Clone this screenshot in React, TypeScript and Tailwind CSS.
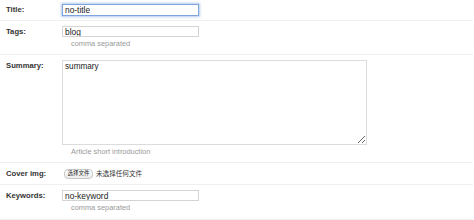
import React from "react";

const font = { fontFamily: '"Liberation Sans", Arial, "Noto Sans CJK SC", sans-serif' };

function Label({ children }: { children: React.ReactNode }) {
  return (
    <div className="w-[62px] shrink-0 pl-[6px] text-[7.7px] font-bold leading-[12px] text-[#333]">
      {children}
    </div>
  );
}

function Help({ children }: { children: React.ReactNode }) {
  return (
    <div className="mt-[2px] pl-[9px] text-[7.4px] leading-[10px] text-[#999999]">{children}</div>
  );
}

export default function App() {
  return (
    <div className="h-[220px] w-[474px] bg-white" style={font}>
      <div className="w-[473px]">
        {/* Title */}
        <div className="flex border-b border-[#efefef] pt-[4px] pb-[4px]">
          <Label>Title:</Label>
          <input
            readOnly
            value="no-title"
            className="box-border h-[12px] w-[137px] border border-[#7ea6dc] px-[2px] text-[8.4px] leading-[10px] text-[#222] outline-none shadow-[0_0_2px_1px_rgba(120,160,220,0.55)]"
          />
        </div>
        {/* Tags */}
        <div className="flex border-b border-[#efefef] pt-[5px] pb-[5px]">
          <Label>Tags:</Label>
          <div className="flex flex-col">
            <input
              readOnly
              value="blog"
              className="box-border h-[11px] w-[137px] border border-[#d4d4d4] px-[2px] text-[8.4px] leading-[9px] text-[#222] outline-none"
            />
            <Help>comma separated</Help>
          </div>
        </div>
        {/* Summary */}
        <div className="flex border-b border-[#efefef] pt-[5px] pb-[5px]">
          <Label>Summary:</Label>
          <div className="flex flex-col">
            <textarea
              readOnly
              value="summary"
              className="box-border block h-[85px] w-[305px] border border-[#dcdcdc] px-[2px] py-[1px] text-[8.2px] leading-[10px] text-[#222] outline-none"
            />
            <Help>Article short introduction</Help>
          </div>
        </div>
        {/* Cover img */}
        <div className="flex items-center border-b border-[#efefef] pt-[5px] pb-[4px]">
          <Label>Cover img:</Label>
          <div className="flex h-[11px] items-center">
            <span className="ml-[2px] flex h-[10px] w-[29px] items-center justify-center rounded-[4px] border border-[#c8c8c8] bg-gradient-to-b from-white to-[#ededed] text-[5.5px] leading-none text-[#222]">
              选择文件
            </span>
            <span className="ml-[3px] text-[6.6px] leading-none text-[#333]">未选择任何文件</span>
          </div>
        </div>
        {/* Keywords */}
        <div className="flex border-b border-[#efefef] pt-[5px] pb-[6px]">
          <Label>Keywords:</Label>
          <div className="flex flex-col">
            <input
              readOnly
              value="no-keyword"
              className="box-border h-[11px] w-[137px] border border-[#d4d4d4] px-[2px] text-[8.4px] leading-[9px] text-[#222] outline-none"
            />
            <Help>comma separated</Help>
          </div>
        </div>
      </div>
    </div>
  );
}
